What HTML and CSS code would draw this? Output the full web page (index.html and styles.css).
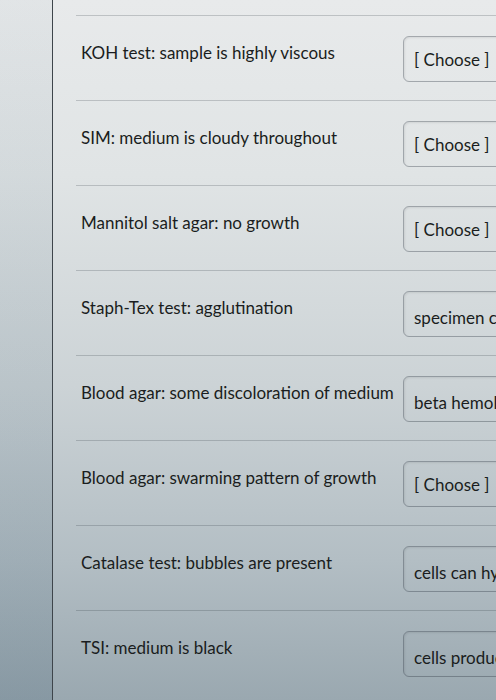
FILE: index.html
```html
<!DOCTYPE html>
<html lang="en">
<head>
  <meta charset="UTF-8" />
  <meta name="viewport" content="width=device-width, initial-scale=1.0" />
  <title>Quiz - Matching</title>
  <link rel="stylesheet" href="styles.css">
</head>
<body>
  <div class="page">
    <div class="sidebar"></div>

    <div class="content">
      <div class="answer-row">
        <div class="label">KOH test: sample is highly viscous</div>
        <div class="select">[ Choose ]</div>
      </div>
      <div class="answer-row">
        <div class="label">SIM: medium is cloudy throughout</div>
        <div class="select">[ Choose ]</div>
      </div>
      <div class="answer-row">
        <div class="label">Mannitol salt agar: no growth</div>
        <div class="select">[ Choose ]</div>
      </div>
      <div class="answer-row">
        <div class="label">Staph-Tex test: agglutination</div>
        <div class="select filled">specimen contains S. aureus</div>
      </div>
      <div class="answer-row">
        <div class="label">Blood agar: some discoloration of medium</div>
        <div class="select filled">beta hemolysis</div>
      </div>
      <div class="answer-row">
        <div class="label">Blood agar: swarming pattern of growth</div>
        <div class="select">[ Choose ]</div>
      </div>
      <div class="answer-row">
        <div class="label">Catalase test: bubbles are present</div>
        <div class="select filled">cells can hydrolyze hydrogen peroxide</div>
      </div>
      <div class="answer-row">
        <div class="label">TSI: medium is black</div>
        <div class="select filled">cells produce hydrogen sulfide</div>
      </div>
    </div>
  </div>
</body>
</html>
```

FILE: styles.css
```css
body {
  margin: 0;
  height: 100vh;
  overflow: hidden;
  font-family: Lato, "Open Sans", sans-serif;
  color: #1a1d20;
  background: linear-gradient(180deg, #e8eaeb 0%, #e0e4e5 25%, #ccd3d6 55%, #b3bec4 80%, #9aa8b0 100%);
}
.page {
  display: flex;
  height: 100%;
}
.sidebar {
  width: 52px;
  flex-shrink: 0;
  background: linear-gradient(180deg, rgba(120, 145, 160, 0.06), rgba(60, 90, 110, 0.2));
  border-right: 1px solid #3e454b;
}
.content {
  padding: 15px 0 0 23px;
  width: 480px;
  flex-shrink: 0;
}
.answer-row {
  display: grid;
  grid-template-columns: 327px 160px;
  height: 85px;
  box-sizing: border-box;
  border-top: 1px solid rgba(40, 50, 60, 0.22);
}
.label {
  padding: 25px 0 0 5px;
  font-size: 17px;
  line-height: 24px;
  white-space: nowrap;
}
/* answer dropdowns run off the right edge, long answers get clipped */
.select {
  margin-top: 20px;
  height: 46px;
  box-sizing: border-box;
  padding: 11px 0 0 10px;
  border: 1px solid rgba(40, 50, 60, 0.35);
  border-radius: 6px;
  box-shadow: inset 1px 1px 2px rgba(0, 0, 0, 0.08);
  font-size: 17px;
  line-height: 24px;
  white-space: nowrap;
  overflow: hidden;
}
.select.filled {
  padding-top: 14px;
}
```
